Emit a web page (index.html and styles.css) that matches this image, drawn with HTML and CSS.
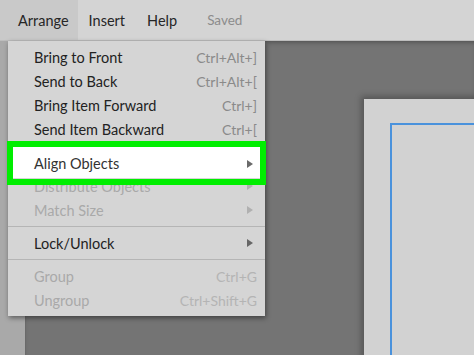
FILE: index.html
```html
<!DOCTYPE html>
<html>
<head>
<meta charset="utf-8">
<link rel="stylesheet" href="styles.css">
</head>
<body>
<div class="app">
  <div class="topbar">
    <div class="tab active">Arrange</div>
    <div class="tab">Insert</div>
    <div class="tab">Help</div>
    <div class="status">Saved</div>
  </div>
  <div class="workspace">
    <div class="leftpanel"></div>
    <div class="canvas">
      <div class="page">
        <div class="selection"></div>
      </div>
    </div>
  </div>
  <div class="menu">
    <div class="item"><span class="label">Bring to Front</span><span class="key">Ctrl+Alt+]</span></div>
    <div class="item"><span class="label">Send to Back</span><span class="key">Ctrl+Alt+[</span></div>
    <div class="item"><span class="label">Bring Item Forward</span><span class="key">Ctrl+]</span></div>
    <div class="item"><span class="label">Send Item Backward</span><span class="key">Ctrl+[</span></div>
    <div class="sep"></div>
    <div class="item hover"><span class="label">Align Objects</span><span class="arrow"></span></div>
    <div class="item disabled"><span class="label">Distribute Objects</span><span class="arrow"></span></div>
    <div class="item disabled"><span class="label">Match Size</span><span class="arrow"></span></div>
    <div class="sep"></div>
    <div class="item"><span class="label">Lock/Unlock</span><span class="arrow"></span></div>
    <div class="sep"></div>
    <div class="item disabled"><span class="label">Group</span><span class="key">Ctrl+G</span></div>
    <div class="item disabled"><span class="label">Ungroup</span><span class="key">Ctrl+Shift+G</span></div>
  </div>
</div>
</body>
</html>
```

FILE: styles.css
```css
* { box-sizing: border-box; }
html, body { margin: 0; padding: 0; }
body {
  width: 474px;
  height: 355px;
  overflow: hidden;
  font-family: Lato, "Open Sans", "Liberation Sans", sans-serif;
  background: #757575;
}
.app {
  position: relative;
  width: 474px;
  height: 355px;
  display: flex;
  flex-direction: column;
}
.topbar {
  height: 41px;
  flex: none;
  background: #d4d4d4;
  display: flex;
  align-items: stretch;
  border-bottom: 1px solid #bdbdbd;
}
.tab {
  display: flex;
  align-items: center;
  font-size: 14.5px;
  color: #262626;
  padding: 0 11px 0 0;
  margin-left: 0;
}
.tab.active {
  background: #c9c9c9;
  padding: 0 9px 0 18px;
  margin-right: 11px;
}
.tab + .tab { padding-right: 22px; }
.status {
  display: flex;
  align-items: center;
  font-size: 13.5px;
  color: #8c8c8c;
  padding-left: 8px;
}
.workspace {
  flex: 1;
  display: flex;
  min-height: 0;
}
.leftpanel {
  width: 26px;
  flex: none;
  background: #a9a9a9;
  border-right: 1px solid #6a6a6a;
}
.canvas {
  flex: 1;
  background: #747474;
  padding: 58px 0 0 338px;
  box-shadow: inset 0 4px 5px -3px rgba(0,0,0,0.35);
  overflow: hidden;
}
.page {
  width: 130px;
  height: 300px;
  background: #d2d2d2;
  padding: 24px 0 0 26px;
  box-shadow: -3px -3px 6px rgba(0,0,0,0.25);
}
.selection {
  width: 120px;
  height: 280px;
  border-left: 2px solid #4a92dc;
  border-top: 2px solid #4a92dc;
}
.menu {
  position: absolute;
  left: 8px;
  top: 41px;
  width: 257px;
  background: #d5d5d5;
  padding: 4px 0;
  z-index: 10;
  box-shadow: 1px 2px 5px rgba(0,0,0,0.45);
}
.item {
  height: 24px;
  display: flex;
  align-items: center;
  justify-content: space-between;
  padding: 0 8px 0 26px;
  font-size: 14.5px;
  color: #222;
}
.key {
  color: #8a8a8a;
  font-size: 14px;
}
.item.disabled .label { color: #a9a9a9; }
.item.disabled .key { color: #b4b4b4; }
.arrow {
  width: 0;
  height: 0;
  border-top: 4px solid transparent;
  border-bottom: 4px solid transparent;
  border-left: 6px solid #666;
  margin-right: 4px;
}
.item.disabled .arrow { border-left-color: #b0b0b0; }
.sep {
  height: 1px;
  margin: 4px 0;
  background: #b5b5b5;
}
.item.hover {
  position: relative;
  padding-top: 3px;
}
.item.hover::before {
  content: "";
  position: absolute;
  left: 5px;
  right: 0;
  top: -3px;
  bottom: -4px;
  background: #ffffff;
  z-index: -1;
}
.item.hover::after {
  content: "";
  position: absolute;
  left: -1px;
  right: -1px;
  top: -9px;
  bottom: -11px;
  border: 6px solid #00ee00;
  z-index: 2;
}
.item.hover .label { color: #333; }
.item.hover .arrow { border-left-color: #6a6a6a; }
```
